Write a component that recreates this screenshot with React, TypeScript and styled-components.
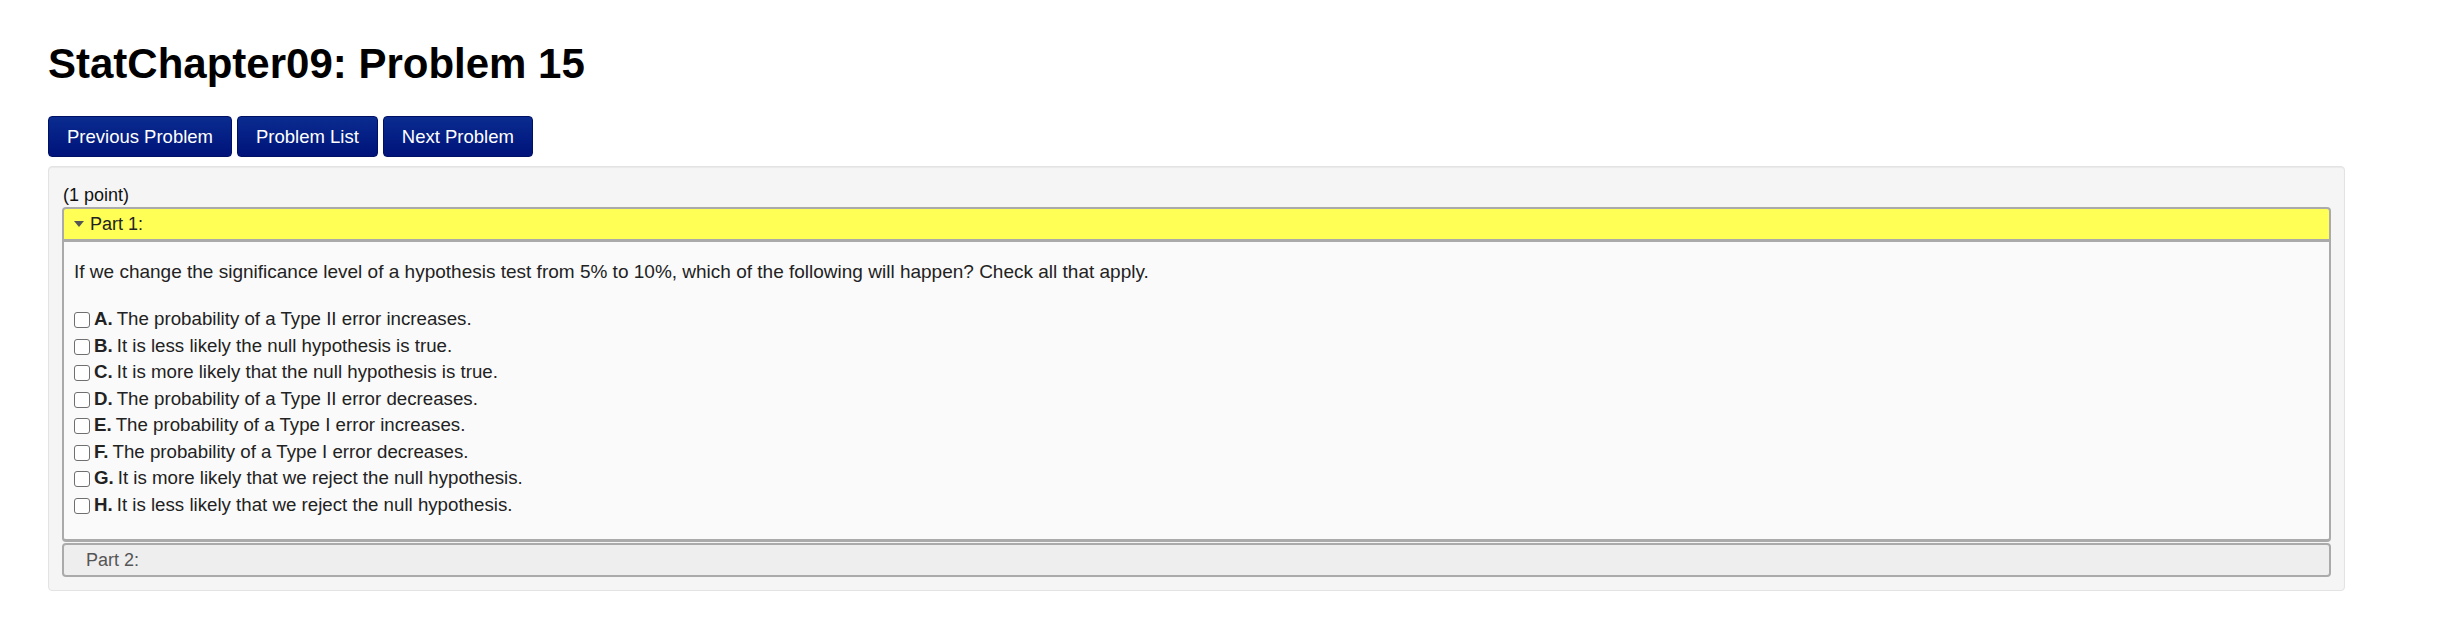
import React from 'react';
import styled, { createGlobalStyle } from 'styled-components';

const GlobalStyle = createGlobalStyle`
  body {
    margin: 0;
    background: #ffffff;
    font-family: "Liberation Sans", Arial, Helvetica, sans-serif;
    color: #222222;
  }
`;

const Page = styled.div`
  display: flex;
  flex-direction: column;
  align-items: flex-start;
  padding: 41px 0 30px 48px;
`;

const Title = styled.h1`
  margin: 0;
  font-size: 42px;
  line-height: 46px;
  font-weight: 700;
  color: #000000;
`;

const NavBar = styled.div`
  display: flex;
  gap: 5px;
  margin-top: 29px;
`;

const NavButton = styled.button`
  height: 41px;
  padding: 0 18px;
  font-family: inherit;
  font-size: 18.5px;
  color: #ffffff;
  background: linear-gradient(to bottom, #0b2c90 0%, #041f85 50%, #00137a 100%);
  border: 1px solid #001163;
  border-radius: 4px;
  cursor: pointer;
`;

const Well = styled.div`
  box-sizing: border-box;
  width: 2297px;
  margin-top: 9px;
  padding: 17px 13px 13px;
  background: #f5f5f5;
  border: 1px solid #e3e3e3;
  border-radius: 4px;
  box-shadow: inset 0 1px 1px rgba(0, 0, 0, 0.05);
`;

const Points = styled.div`
  font-size: 18px;
  line-height: 22px;
  padding-left: 1px;
  color: #111111;
`;

const PartHeader = styled.div<{ $open?: boolean }>`
  display: flex;
  align-items: center;
  gap: 6px;
  margin-top: 1px;
  padding: 4px 10px 4px ${(p) => (p.$open ? '10px' : '22px')};
  font-size: 18px;
  line-height: 22px;
  color: ${(p) => (p.$open ? '#222222' : '#555555')};
  background: ${(p) => (p.$open ? '#ffff55' : '#eeeeee')};
  border: 2px solid #aaaaaa;
  border-bottom-width: ${(p) => (p.$open ? '3px' : '2px')};
  border-radius: ${(p) => (p.$open ? '4px 4px 0 0' : '4px')};
`;

const Caret = styled.svg`
  width: 10px;
  height: 6px;
  flex-shrink: 0;
`;

const PartBody = styled.div`
  padding: 19px 11px 21px 10px;
  background: #fafafa;
  border: 2px solid #aaaaaa;
  border-top: none;
  border-bottom-width: 3px;
  border-radius: 0 0 4px 4px;
  font-size: 19px;
`;

const Prompt = styled.p`
  margin: 0;
  line-height: 22px;
`;

const OptionList = styled.div`
  display: flex;
  flex-direction: column;
  margin-top: 23px;
  font-size: 18.7px;
`;

const OptionRow = styled.label`
  display: flex;
  align-items: center;
  height: 26.5px;
  line-height: 22px;
`;

const Box = styled.input`
  appearance: none;
  box-sizing: border-box;
  width: 16px;
  height: 16px;
  margin: 2px 4px 0 0;
  background: #ffffff;
  border: 1px solid #6f6f6f;
  border-radius: 3px;
`;

const Letter = styled.b`
  font-weight: 700;
  margin-right: 4px;
`;

const options = [
  ['A.', 'The probability of a Type II error increases.'],
  ['B.', 'It is less likely the null hypothesis is true.'],
  ['C.', 'It is more likely that the null hypothesis is true.'],
  ['D.', 'The probability of a Type II error decreases.'],
  ['E.', 'The probability of a Type I error increases.'],
  ['F.', 'The probability of a Type I error decreases.'],
  ['G.', 'It is more likely that we reject the null hypothesis.'],
  ['H.', 'It is less likely that we reject the null hypothesis.'],
];

export default function App() {
  return (
    <>
      <GlobalStyle />
      <Page>
        <Title>StatChapter09: Problem 15</Title>
        <NavBar>
          <NavButton>Previous Problem</NavButton>
          <NavButton>Problem List</NavButton>
          <NavButton>Next Problem</NavButton>
        </NavBar>
        <Well>
          <Points>(1 point)</Points>
          <PartHeader $open>
            <Caret viewBox="0 0 10 6">
              <polygon points="0,0 10,0 5,6" fill="#555555" />
            </Caret>
            Part 1:
          </PartHeader>
          <PartBody>
            <Prompt>
              If we change the significance level of a hypothesis test from 5% to 10%, which of the
              following will happen? Check all that apply.
            </Prompt>
            <OptionList>
              {options.map(([letter, text]) => (
                <OptionRow key={letter}>
                  <Box type="checkbox" />
                  <Letter>{letter}</Letter>
                  {text}
                </OptionRow>
              ))}
            </OptionList>
          </PartBody>
          <PartHeader>Part 2:</PartHeader>
        </Well>
      </Page>
    </>
  );
}
